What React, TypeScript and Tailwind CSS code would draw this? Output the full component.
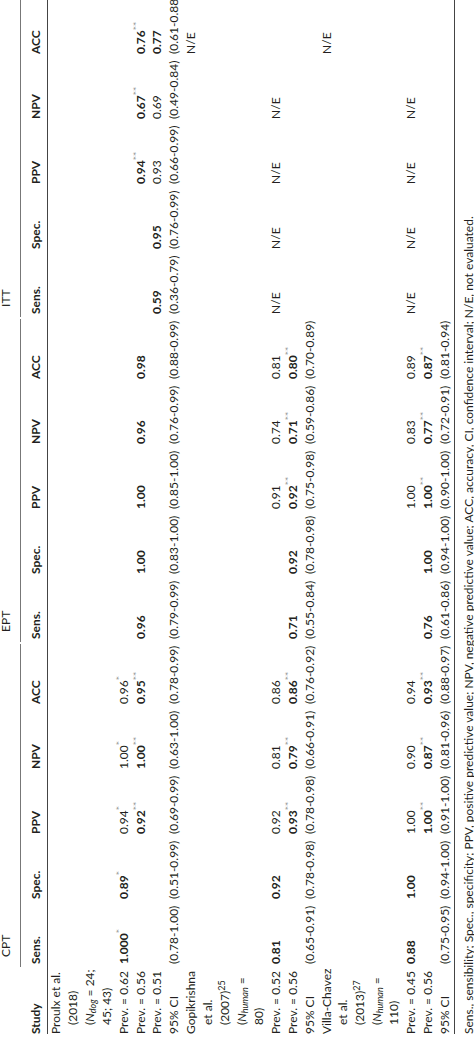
import React from "react";

type V = { t: string; b?: boolean; s?: string };
type C = V | null;

const B = (t: string, s?: string): V => ({ t, b: true, s });
const R = (t: string, s?: string): V => ({ t, s });

type Row = { study: React.ReactNode; indent?: boolean; cells?: Record<number, C> };

const ci = (arr: string[]) => {
  const o: Record<number, C> = {};
  arr.forEach((t, i) => {
    if (t) o[i] = R(t);
  });
  return o;
};

const rows: Row[] = [
  { study: "Proulx et al." },
  { study: "(2018)", indent: true },
  {
    study: (
      <>
        (<i>N</i>
        <sub>
          <i>dog</i>
        </sub>{" "}
        = 24;
      </>
    ),
    indent: true,
  },
  { study: "45; 43)", indent: true },
  {
    study: "Prev. = 0.62",
    cells: { 0: B("1.000", "*"), 1: B("0.89", "*"), 2: R("0.94", "*"), 3: R("1.00", "*"), 4: R("0.96", "*") },
  },
  {
    study: "Prev. = 0.56",
    cells: {
      2: B("0.92", "**"),
      3: B("1.00", "**"),
      4: B("0.95", "**"),
      5: B("0.96"),
      6: B("1.00"),
      7: B("1.00"),
      8: B("0.96"),
      9: B("0.98"),
      12: B("0.94", "**"),
      13: B("0.67", "**"),
      14: B("0.76", "**"),
    },
  },
  {
    study: "Prev. = 0.51",
    cells: { 10: B("0.59"), 11: B("0.95"), 12: R("0.93"), 13: R("0.69"), 14: B("0.77") },
  },
  {
    study: "95% CI",
    cells: ci([
      "(0.78-1.00)",
      "(0.51-0.99)",
      "(0.69-0.99)",
      "(0.63-1.00)",
      "(0.78-0.99)",
      "(0.79-0.99)",
      "(0.83-1.00)",
      "(0.85-1.00)",
      "(0.76-0.99)",
      "(0.88-0.99)",
      "(0.36-0.79)",
      "(0.76-0.99)",
      "(0.66-0.99)",
      "(0.49-0.84)",
      "(0.61-0.88)",
    ]),
  },
  { study: "Gopikrishna", cells: { 14: R("N/E") } },
  { study: "et al.", indent: true },
  {
    study: (
      <>
        (2007)<sup>25</sup>
      </>
    ),
    indent: true,
  },
  {
    study: (
      <>
        (<i>N</i>
        <sub>
          <i>human</i>
        </sub>{" "}
        =
      </>
    ),
    indent: true,
  },
  { study: "80)", indent: true },
  {
    study: "Prev. = 0.52",
    cells: {
      0: B("0.81"),
      1: B("0.92"),
      2: R("0.92"),
      3: R("0.81"),
      4: R("0.86"),
      7: R("0.91"),
      8: R("0.74"),
      9: R("0.81"),
      10: R("N/E"),
      11: R("N/E"),
      12: R("N/E"),
      13: R("N/E"),
    },
  },
  {
    study: "Prev. = 0.56",
    cells: {
      2: B("0.93", "**"),
      3: B("0.79", "**"),
      4: B("0.86", "**"),
      5: B("0.71"),
      6: B("0.92"),
      7: B("0.92", "**"),
      8: B("0.71", "**"),
      9: B("0.80", "**"),
    },
  },
  {
    study: "95% CI",
    cells: ci([
      "(0.65-0.91)",
      "(0.78-0.98)",
      "(0.78-0.98)",
      "(0.66-0.91)",
      "(0.76-0.92)",
      "(0.55-0.84)",
      "(0.78-0.98)",
      "(0.75-0.98)",
      "(0.59-0.86)",
      "(0.70-0.89)",
    ]),
  },
  { study: "Villa-Chavez", cells: { 14: R("N/E") } },
  { study: "et al.", indent: true },
  {
    study: (
      <>
        (2013)<sup>27</sup>
      </>
    ),
    indent: true,
  },
  {
    study: (
      <>
        (<i>N</i>
        <sub>
          <i>human</i>
        </sub>{" "}
        =
      </>
    ),
    indent: true,
  },
  { study: "110)", indent: true },
  {
    study: "Prev. = 0.45",
    cells: {
      0: B("0.88"),
      1: B("1.00"),
      2: R("1.00"),
      3: R("0.90"),
      4: R("0.94"),
      7: R("1.00"),
      8: R("0.83"),
      9: R("0.89"),
      10: R("N/E"),
      11: R("N/E"),
      12: R("N/E"),
      13: R("N/E"),
    },
  },
  {
    study: "Prev. = 0.56",
    cells: {
      2: B("1.00", "**"),
      3: B("0.87", "**"),
      4: B("0.93", "**"),
      5: B("0.76"),
      6: B("1.00"),
      7: B("1.00", "**"),
      8: B("0.77", "**"),
      9: B("0.87", "**"),
    },
  },
  {
    study: "95% CI",
    cells: ci([
      "(0.75-0.95)",
      "(0.94-1.00)",
      "(0.91-1.00)",
      "(0.81-0.96)",
      "(0.88-0.97)",
      "(0.61-0.86)",
      "(0.94-1.00)",
      "(0.90-1.00)",
      "(0.72-0.91)",
      "(0.81-0.94)",
    ]),
  },
];

const heads = ["Sens.", "Spec.", "PPV", "NPV", "ACC"];

function Val({ v }: { v: C }) {
  if (!v) return null;
  return (
    <span className={v.b ? "font-bold" : "font-normal"}>
      {v.t}
      {v.s && <sup className="font-normal text-[10px] text-[#8a8a8a]">{v.s}</sup>}
    </span>
  );
}

export default function App() {
  const cols = Array.from({ length: 15 }, (_, i) => i);
  return (
    <div className="relative w-[474px] h-[1037px] overflow-hidden bg-white">
      <div className="w-[1037px] h-[474px] origin-top-left -rotate-90 translate-y-[1037px] font-['Lato','Open_Sans',sans-serif] text-[12px] text-[#231f20]">
        <table className="table-fixed border-collapse w-[1045px] -mt-[3px]">
          <colgroup>
            <col className="w-[70px]" />
            {cols.map((i) => (
              <col key={i} className="w-[65px]" />
            ))}
          </colgroup>
          <thead>
            <tr>
              <th className="p-0" />
              {["CPT", "EPT", "ITT"].map((g) => (
                <th key={g} colSpan={5} className="p-0 font-normal text-left align-top">
                  <div className="ml-[-3px] mr-[5px] pl-[10px] h-[21px] leading-[12px] border-b border-[#777]">
                    {g}
                  </div>
                </th>
              ))}
            </tr>
            <tr className="border-b border-[#444]">
              <th className="p-0 pt-[9px] pb-[5px] leading-[12px] text-left font-bold">Study</th>
              {cols.map((i) => (
                <th key={i} className="p-0 pt-[9px] pb-[5px] leading-[12px] text-left font-bold">
                  {heads[i % 5]}
                </th>
              ))}
            </tr>
          </thead>
          <tbody>
            {rows.map((r, ri) => (
              <tr key={ri} className={ri === rows.length - 1 ? "border-b border-[#444]" : ""}>
                <td
                  className={`p-0 h-[16.9px] leading-[16.9px] whitespace-nowrap text-left align-middle ${
                    r.indent ? "pl-[9px]" : ""
                  }`}
                >
                  {r.study}
                </td>
                {cols.map((i) => (
                  <td key={i} className="p-0 h-[16.9px] leading-[16.9px] whitespace-nowrap text-left align-middle">
                    <Val v={r.cells ? r.cells[i] ?? null : null} />
                  </td>
                ))}
              </tr>
            ))}
          </tbody>
        </table>
        <p className="mt-[7px] leading-[14px] whitespace-nowrap">
          Sens., sensibility; Spec., specificity; PPV, positive predictive value; NPV, negative predictive value; ACC,
          accuracy, CI, confidence interval; N/E, not evaluated.
        </p>
      </div>
    </div>
  );
}
